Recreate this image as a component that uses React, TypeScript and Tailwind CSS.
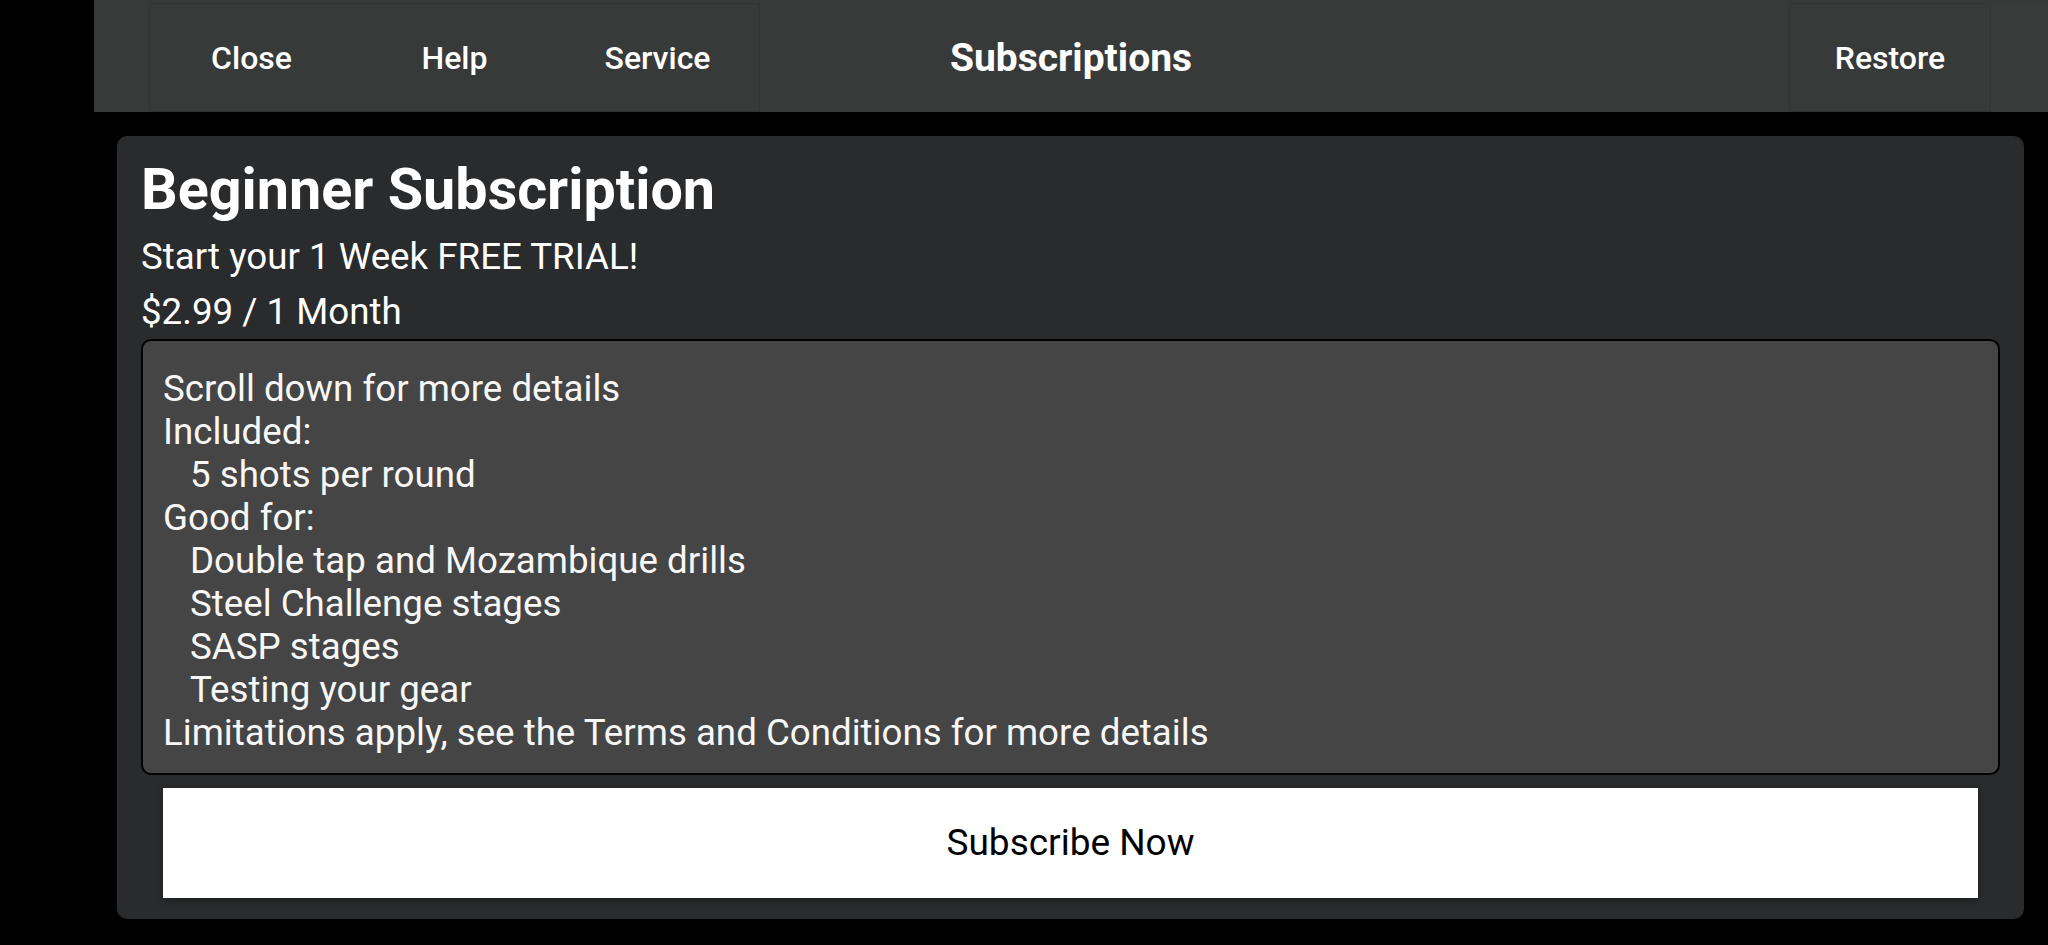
export default function App() {
  const details = [
    { text: 'Scroll down for more details', indent: false },
    { text: 'Included:', indent: false },
    { text: '5 shots per round', indent: true },
    { text: 'Good for:', indent: false },
    { text: 'Double tap and Mozambique drills', indent: true },
    { text: 'Steel Challenge stages', indent: true },
    { text: 'SASP stages', indent: true },
    { text: 'Testing your gear', indent: true },
    { text: 'Limitations apply, see the Terms and Conditions for more details', indent: false },
  ]

  return (
    <div className="w-[2048px] h-[945px] bg-black overflow-hidden font-['Roboto','Liberation_Sans',sans-serif] text-white">
      {/* Top bar */}
      <div className="relative ml-[94px] h-[112px] bg-[#383a39] flex pt-[3px]">
        <div className="w-[55px]" />
        <div className="flex border border-[#333534]">
          <button className="w-[203px] text-[32px] font-medium">Close</button>
          <button className="w-[203px] text-[32px] font-medium">Help</button>
          <button className="w-[203px] text-[32px] font-medium">Service</button>
        </div>
        <div className="flex-1" />
        <button className="w-[202px] border border-[#333534] text-[32px] font-medium">Restore</button>
        <div className="w-[57px] bg-[#3a3b3b]" />
        <div className="absolute inset-0 flex items-center justify-center pt-[5px] pointer-events-none">
          <span className="text-[39px] font-bold">Subscriptions</span>
        </div>
      </div>

      {/* Subscription card */}
      <div className="mt-[24px] ml-[117px] w-[1907px] h-[783px] rounded-[10px] bg-[#2a2b2d] px-[24px] pt-[22px] flex flex-col">
        <h1 className="text-[57.5px] leading-[64px] font-bold">Beginner Subscription</h1>
        <p className="mt-[7px] text-[36.7px] leading-[55px]">Start your 1 Week FREE TRIAL!</p>
        <p className="text-[36.7px] leading-[55px]">$2.99 / 1 Month</p>

        <div className="h-[436px] rounded-[10px] border-2 border-black bg-[#454545] pl-[20px] pt-[26px]">
          {details.map((d) => (
            <div key={d.text} className={`text-[36.7px] leading-[43px] text-[#f7f7f7] ${d.indent ? 'pl-[27px]' : ''}`}>
              {d.text}
            </div>
          ))}
        </div>

        <button className="mx-[22px] mt-[13px] h-[110px] bg-white text-black text-[37px] shadow-[0_2px_6px_rgba(0,0,0,0.35)]">
          Subscribe Now
        </button>
      </div>
    </div>
  )
}
